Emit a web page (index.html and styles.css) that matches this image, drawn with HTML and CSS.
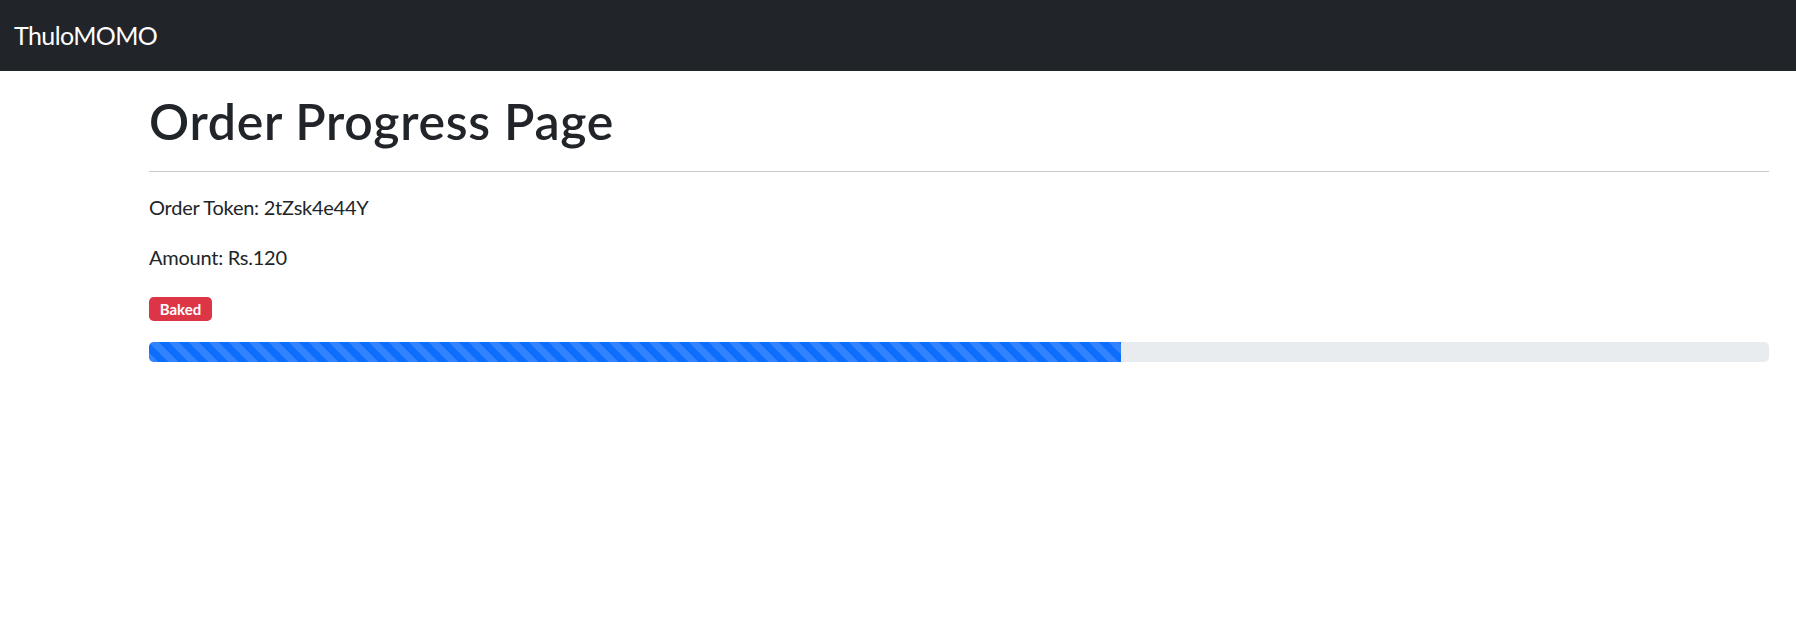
FILE: index.html
```html
<!DOCTYPE html>
<html lang="en">
<head>
<meta charset="utf-8">
<title>Order Progress Page</title>
<link rel="stylesheet" href="styles.css">
</head>
<body>
<nav class="navbar">
  <a class="brand" href="#">ThuloMOMO</a>
</nav>
<main class="container">
  <h1 class="title">Order Progress Page</h1>
  <hr class="rule">
  <p class="info">Order Token: 2tZsk4e44Y</p>
  <p class="info">Amount: Rs.120</p>
  <div class="status">
    <span class="badge">Baked</span>
  </div>
  <div class="progress">
    <div class="progress-bar" style="width: 60%"></div>
  </div>
</main>
</body>
</html>
```
FILE: styles.css
```css
* {
  box-sizing: border-box;
}

html, body {
  margin: 0;
  padding: 0;
  background: #ffffff;
}

body {
  font-family: Lato, "Open Sans", "Noto Sans", sans-serif;
  font-size: 20px;
  line-height: 30px;
  color: #212529;
}

.navbar {
  display: flex;
  align-items: center;
  background: #212529;
  padding: 10px 14px;
  height: 71px;
}

.brand {
  color: #ffffff;
  text-decoration: none;
  font-size: 25px;
  line-height: 37.5px;
  letter-spacing: -0.6px;
  padding: 6.25px 0;
}

.container {
  width: 1650px;
  margin-left: 134px;
  padding: 20px 15px 0;
}

.title {
  margin: 0 0 10px;
  font-size: 50px;
  line-height: 60px;
  font-weight: 600;
  letter-spacing: 0.7px;
}

.rule {
  margin: 20px 0;
  border: 0;
  border-top: 1px solid #c8c9ca;
  height: 0;
}

.info {
  margin: 0 0 20px;
  letter-spacing: -0.25px;
}

.status {
  display: flex;
  padding-top: 5px;
  margin-bottom: 21px;
}

.badge {
  display: inline-block;
  background: #dc3545;
  color: #ffffff;
  font-size: 15px;
  font-weight: 700;
  line-height: 15px;
  padding: 4.5px 10.75px;
  border-radius: 4.7px;
}

.progress {
  display: flex;
  height: 20px;
  background: #e9ecef;
  border-radius: 4.7px;
  overflow: hidden;
}

.progress-bar {
  height: 100%;
  background-color: #0d6efd;
  background-image: linear-gradient(45deg,
    rgba(255, 255, 255, 0.15) 25%, transparent 25%,
    transparent 50%, rgba(255, 255, 255, 0.15) 50%,
    rgba(255, 255, 255, 0.15) 75%, transparent 75%, transparent);
  background-size: 20px 20px;
}
```
